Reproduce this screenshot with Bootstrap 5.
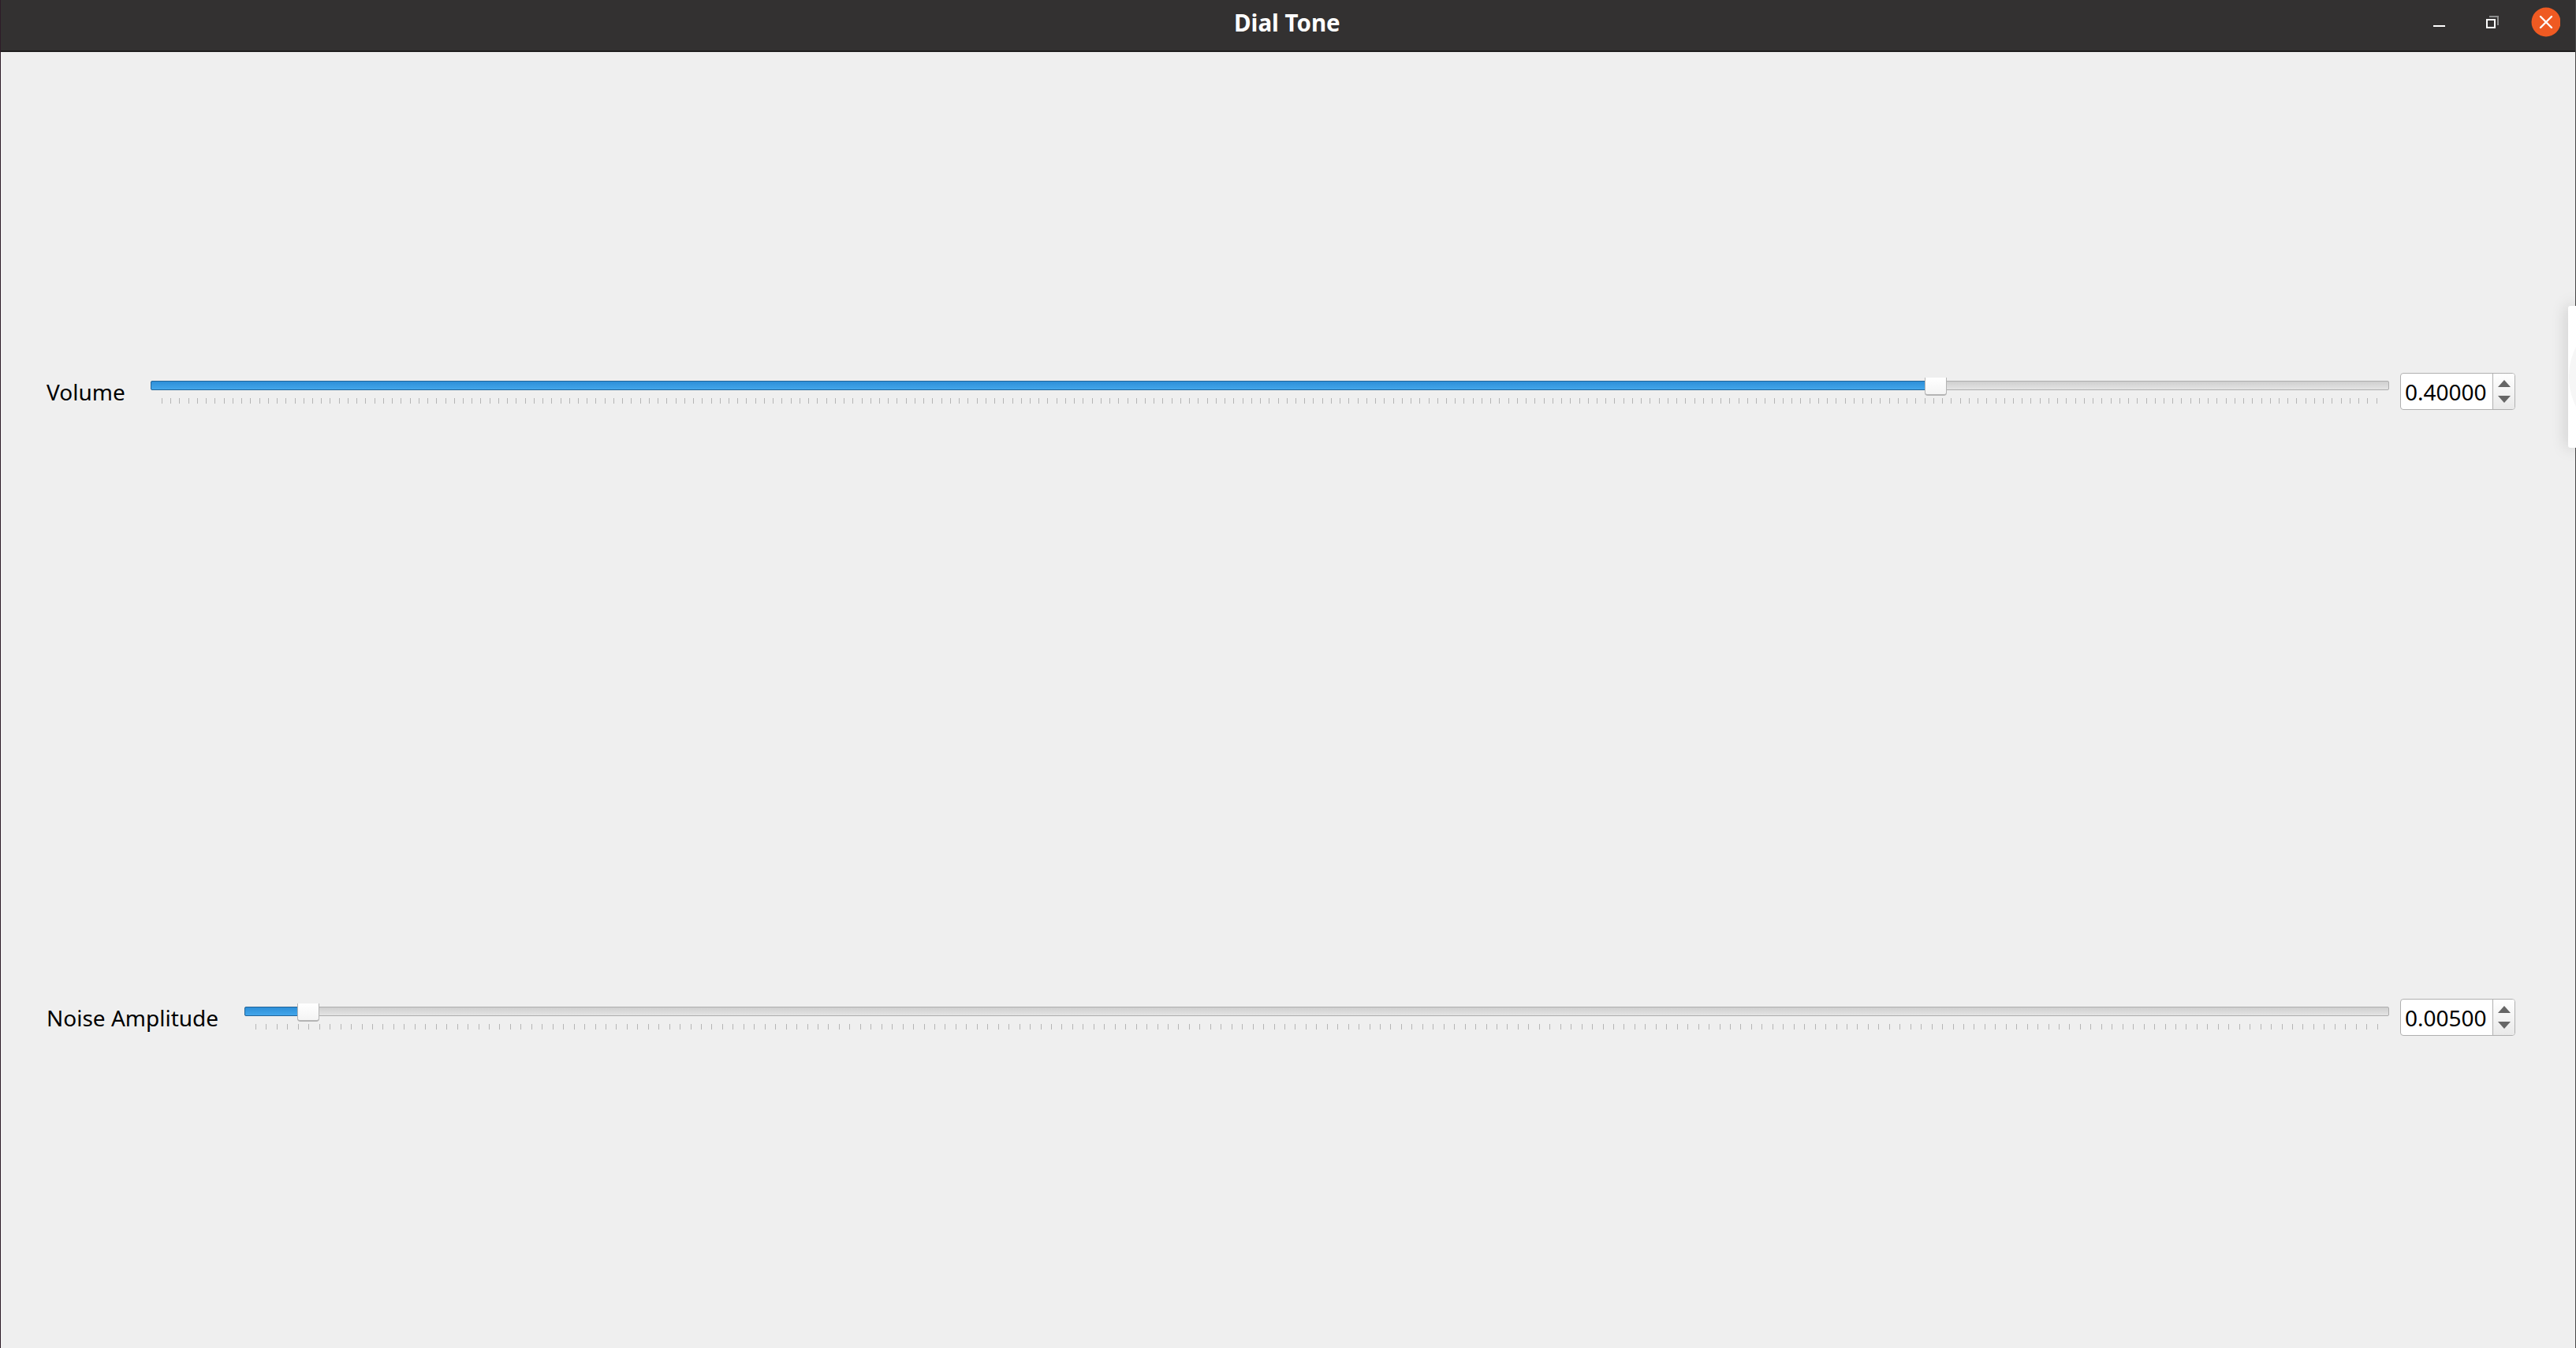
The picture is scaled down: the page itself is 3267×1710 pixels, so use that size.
<!DOCTYPE html>
<html lang="en">
<head>
<meta charset="utf-8">
<title>Dial Tone</title>
<link href="https://cdn.jsdelivr.net/npm/bootstrap@5.3.0/dist/css/bootstrap.min.css" rel="stylesheet">
<style>
html,body{height:100%;margin:0}
body{background:#efefef;color:#000;font-family:"Noto Sans","Open Sans",sans-serif;font-size:28px;line-height:1;overflow:hidden;width:3267px;height:1710px}
.app-win{height:1710px;border-left:1px solid #2e1c28;border-right:1px solid #4a4a4a}
.title-bar{height:66px;background:#333131;border-bottom:2px solid #1f1e1e;flex:none;padding-right:19px}
.title-text{color:#fff;font-weight:700;font-size:29.5px;left:1564px;top:13px;line-height:32px}
.wm-btn{display:block}
.form-area{padding:407px 76px 0 58px;gap:747px}
.form-line{height:47px}
.form-label{line-height:49px;white-space:nowrap;flex:none}
.label-short{width:132px}
.label-long{width:251px}
.slider-col{height:47px}
.groove{height:12px;margin-top:10px;border:1px solid #adadad;border-radius:2px;background:linear-gradient(#cfcfcf,#e4e4e4)}
.groove-fill{height:12px;margin:-1px 0 0 -1px;border:1px solid #22659a;border-radius:2px 0 0 2px;background:linear-gradient(#2d8fd8,#43a6ea)}
.handle{top:6px;width:28px;height:23px;background:linear-gradient(#fff,#f4f4f4);border:1px solid #b4b4b4;border-top:0;border-bottom-width:2px;border-radius:0 0 4px 4px}
.tick-row{margin:10px 13px 0 14px;height:7px}
.tick-row i{display:block;width:1px;height:7px;background:#b5b5b5}
.spin{width:146px;height:47px;margin-left:14px;border:1px solid #b0b0b0;border-radius:4px;background:#fff;overflow:hidden}
.spin-val{padding-left:5px;line-height:47px;font-size:28px;flex:1}
.spin-btns{width:28px;border-left:1px solid #b0b0b0;background:linear-gradient(#fff,#e9e9e9);gap:11px}
.tri-up{width:0;height:0;border:8px solid transparent;border-top:0;border-bottom:9px solid #666}
.tri-down{width:0;height:0;border:8px solid transparent;border-bottom:0;border-top:9px solid #666}
.side-popup{right:-1px;top:388px;width:10px;height:180px;background:#fff;border-radius:3px 0 0 3px;box-shadow:0 0 20px rgba(0,0,0,.22);overflow:hidden}
.side-disc{left:1px;top:10px;width:150px;height:160px;border-radius:50%;background:#f6f6f6}
</style>
</head>
<body>
<div class="app-win d-flex flex-column position-relative">
  <header class="title-bar d-flex align-items-center justify-content-end position-relative">
    <span class="title-text position-absolute">Dial Tone</span>
    <svg class="wm-btn" width="161" height="64" viewBox="3086 0 161 64" aria-hidden="true">
      <rect x="3085" y="32" width="16" height="2" fill="#fff"/>
      <path d="M3157 21h11v11" fill="none" stroke="#8d8d8d" stroke-width="2"/>
      <rect x="3154" y="25" width="10" height="10" fill="#333131" stroke="#fff" stroke-width="2"/>
      <circle cx="3229" cy="28" r="18.5" fill="#ef5a22"/>
      <path d="M3222 21l14 14M3236 21l-14 14" stroke="#fff" stroke-width="2.4" stroke-linecap="round"/>
    </svg>
  </header>
  <main class="form-area d-flex flex-column">
    <div class="form-line d-flex">
      <label class="form-label label-short mb-0">Volume</label>
      <div class="slider-col flex-grow-1 position-relative">
        <div class="groove"><div class="groove-fill" style="width:2251px"></div></div>
        <div class="tick-row d-flex justify-content-between" data-n="251"></div>
        <div class="handle position-absolute" style="left:2250px"></div>
      </div>
      <div class="spin d-flex">
        <div class="spin-val">0.40000</div>
        <div class="spin-btns d-flex flex-column align-items-center justify-content-center"><span class="tri-up"></span><span class="tri-down"></span></div>
      </div>
    </div>
    <div class="form-line d-flex">
      <label class="form-label label-long mb-0">Noise Amplitude</label>
      <div class="slider-col flex-grow-1 position-relative">
        <div class="groove"><div class="groove-fill" style="width:68px"></div></div>
        <div class="tick-row d-flex justify-content-between" data-n="201"></div>
        <div class="handle position-absolute" style="left:67px"></div>
      </div>
      <div class="spin d-flex">
        <div class="spin-val">0.00500</div>
        <div class="spin-btns d-flex flex-column align-items-center justify-content-center"><span class="tri-up"></span><span class="tri-down"></span></div>
      </div>
    </div>
  </main>
  <div class="side-popup position-absolute"><div class="side-disc position-absolute"></div></div>
</div>
<script>
document.querySelectorAll('.tick-row').forEach(function(r){
  var n=+r.dataset.n;
  for(var i=0;i<n;i++){r.appendChild(document.createElement('i'));}
});
</script>
<script src="https://cdn.jsdelivr.net/npm/bootstrap@5.3.0/dist/js/bootstrap.bundle.min.js"></script>
</body>
</html>
